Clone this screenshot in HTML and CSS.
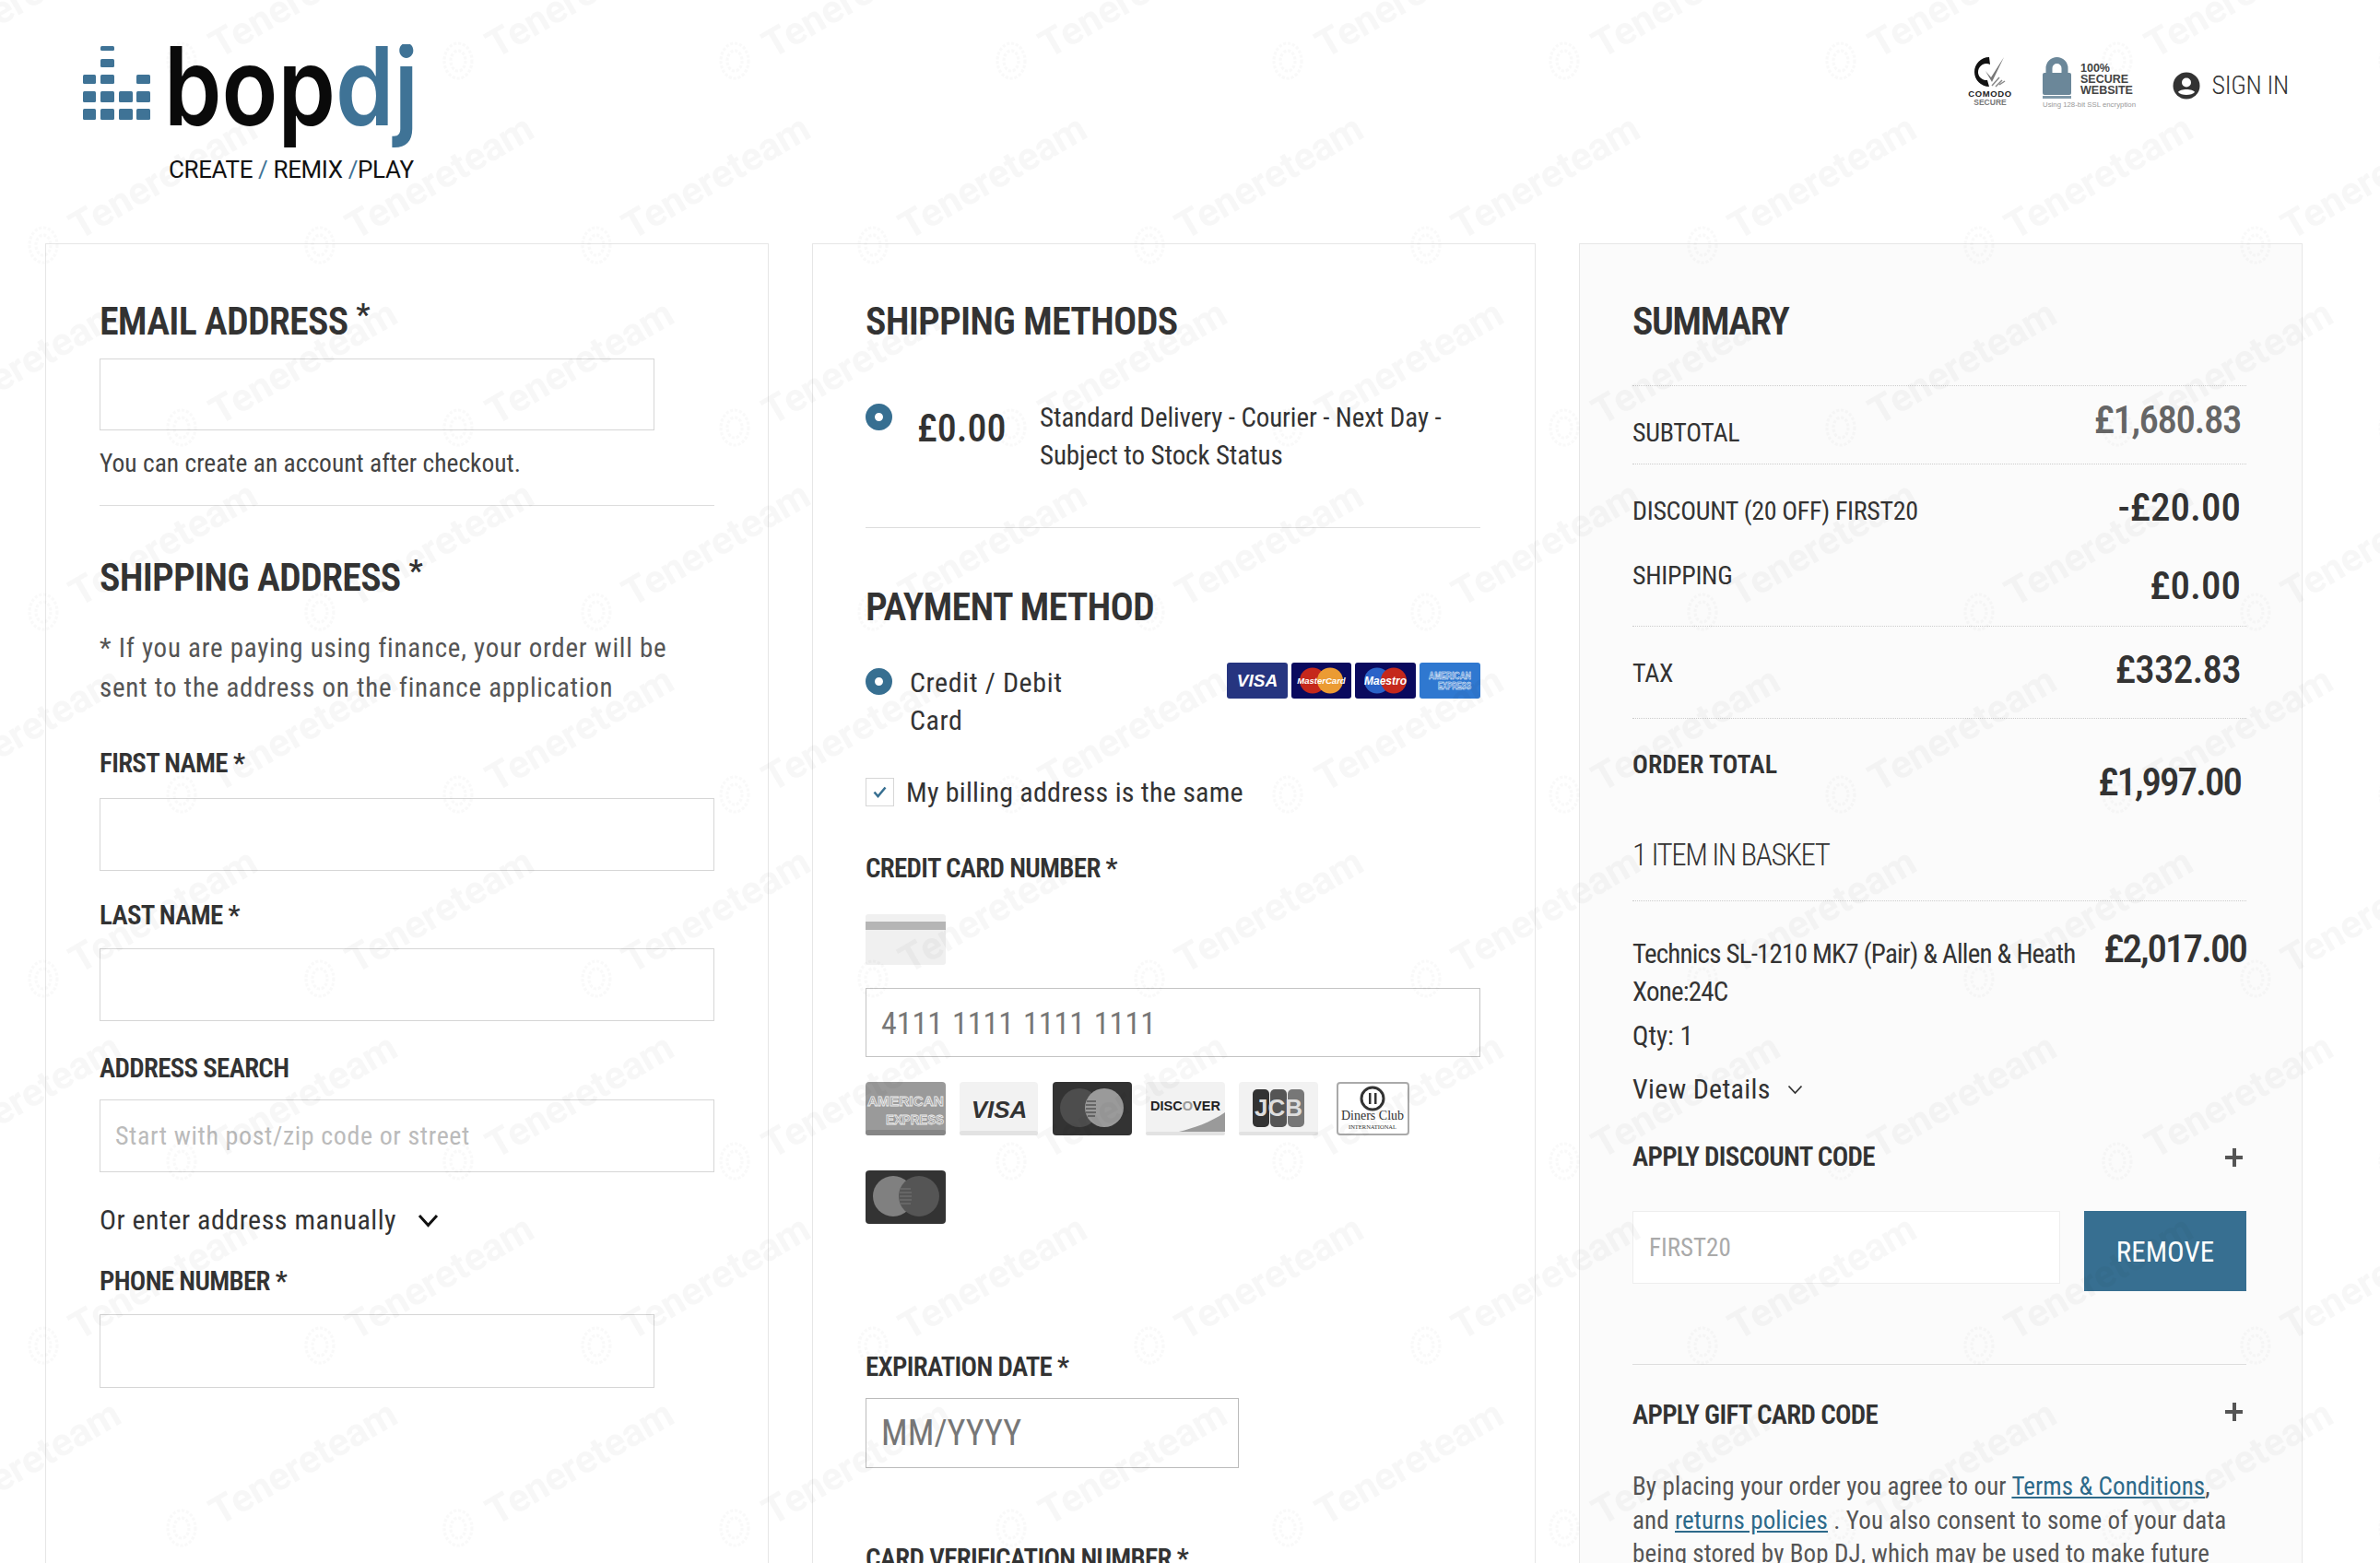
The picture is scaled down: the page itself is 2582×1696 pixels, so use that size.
FILE: index.html
```html
<!DOCTYPE html>
<html lang="en">
  <head>
    <meta charset="UTF-8" />
    <meta name="viewport" content="width=device-width, initial-scale=1.0" />
    <title>Bop DJ - Checkout</title>
    <link rel="stylesheet" href="styles.css">
  </head>
  <body>
    <header class="site-header">
      <a class="logo" href="#">
        <svg width="370" height="160" viewBox="88 48 370 160" role="img" aria-label="bopdj">
          <g fill="#3f7396">
            <rect x="90" y="118" width="14" height="12" rx="1.5" /><rect x="109" y="118" width="15" height="12" rx="1.5" /><rect x="129" y="118" width="15" height="12" rx="1.5" /><rect x="148" y="118" width="15" height="12" rx="1.5" />
            <rect x="90" y="99" width="14" height="12" rx="1.5" /><rect x="109" y="99" width="15" height="12" rx="1.5" /><rect x="129" y="99" width="15" height="12" rx="1.5" /><rect x="148" y="99" width="15" height="12" rx="1.5" />
            <rect x="90" y="81" width="14" height="10" rx="1.5" /><rect x="109" y="81" width="15" height="10" rx="1.5" /><rect x="148" y="81" width="15" height="10" rx="1.5" />
            <rect x="109" y="64" width="15" height="9" rx="1.5" />
            <rect x="109" y="50" width="15" height="5" rx="1.5" />
          </g>
          <text class="logo-word" x="178" y="136" textLength="186" lengthAdjust="spacingAndGlyphs" fill="#0a0a0a">bop</text>
          <text class="logo-word" x="364" y="136" textLength="90" lengthAdjust="spacingAndGlyphs" fill="#3f7396">dj</text>
          <text class="logo-tag" x="183" y="193" textLength="266" lengthAdjust="spacing" fill="#111">CREATE <tspan fill="#3f7396">/</tspan> REMIX <tspan fill="#3f7396">/</tspan>PLAY</text>
        </svg>
      </a>
      <div class="header-right">
        <svg class="badge-comodo" width="52" height="62" viewBox="0 0 52 62" role="img" aria-label="Comodo Secure">
          <path d="M25 0 A16 16 0 1 0 25 32 L23 25 A9 9 0 1 1 26 8 Z" fill="#111" />
          <path d="M21 15 L27 22 L41 0 L28 27 Z" fill="#777" />
          <path d="M28 31 L36 22 M32 32 L39 25 M36 30 L42 26" stroke="#888" stroke-width="1.5" />
          <text x="26" y="43" text-anchor="middle" class="comodo-1">COMODO</text>
          <text x="26" y="52" text-anchor="middle" class="comodo-2">SECURE</text>
        </svg>
        <svg class="badge-secure" width="102" height="58" viewBox="0 0 102 58" role="img" aria-label="100% Secure Website">
          <path d="M7 17 V12 A8.500 8.500 0 0 1 24 12 V17" fill="none" stroke="#6b8799" stroke-width="7" />
          <rect x="0" y="17" width="31" height="24" rx="2" fill="#6b8799" />
          <rect x="0" y="42" width="31" height="3" fill="#7f98a8" />
          <text x="41" y="16" class="secure-1">100%</text>
          <text x="41" y="28" class="secure-1">SECURE</text>
          <text x="41" y="40" class="secure-1">WEBSITE</text>
          <text x="0" y="54" class="secure-2" textLength="101" lengthAdjust="spacingAndGlyphs">Using 128-bit SSL encryption</text>
        </svg>
        <a class="sign-in" href="#">
          <svg width="30" height="30" viewBox="0 0 30 30">
            <circle cx="15" cy="15" r="14.500" fill="#333" />
            <circle cx="15" cy="11.500" r="5" fill="#fff" />
            <path d="M6 22 C8 18 22 18 24 22 C21 26 9 26 6 22 Z" fill="#fff" />
          </svg>
          <span>SIGN IN</span>
        </a>
      </div>
    </header>

    <main class="columns">
      <section class="col">
        <h2>EMAIL ADDRESS <sup>*</sup></h2>
        <input class="input input-short email-input" type="text" />
        <p class="help">You can create an account after checkout.</p>
        <hr class="rule rule-email" />

        <h2 class="shipping-title">SHIPPING ADDRESS <sup>*</sup></h2>
        <p class="note">* If you are paying using finance, your order will be sent to the address on the finance application</p>

        <label class="label first-label">FIRST NAME *</label>
        <input class="input first-input" type="text" />
        <label class="label last-label">LAST NAME *</label>
        <input class="input last-input" type="text" />
        <label class="label search-label">ADDRESS SEARCH</label>
        <input class="input search-input" type="text" placeholder="Start with post/zip code or street" />
        <div class="manual">
          <span>Or enter address manually</span>
          <svg width="23" height="15" viewBox="0 0 23 15"><path d="M2 2 L11.500 12.500 L21 2" fill="none" stroke="#111" stroke-width="3" /></svg>
        </div>
        <label class="label phone-label">PHONE NUMBER *</label>
        <input class="input input-short phone-input" type="text" />
      </section>

      <section class="col col-pay">
        <h2>SHIPPING METHODS</h2>
        <div class="ship-row">
          <span class="radio"></span>
          <span class="ship-price">£0.00</span>
          <span class="ship-text">Standard Delivery - Courier - Next Day - Subject to Stock Status</span>
        </div>
        <hr class="rule rule-ship" />

        <h2 class="payment-title">PAYMENT METHOD</h2>
        <div class="pay-row">
          <span class="radio"></span>
          <span class="pay-text">Credit / Debit<br />Card</span>
          <div class="pay-logos">
            <svg width="66" height="39" viewBox="0 0 66 39"><rect width="66" height="39" rx="3" fill="#263580" /><text x="33" y="26" text-anchor="middle" class="visa-small">VISA</text></svg>
            <svg width="65" height="39" viewBox="0 0 65 39"><rect width="65" height="39" rx="3" fill="#0a0a5e" /><circle cx="23" cy="19.500" r="14" fill="#c5281c" /><circle cx="42" cy="19.500" r="14" fill="#eb9b33" /><text x="32.500" y="23" text-anchor="middle" class="mc-small">MasterCard</text></svg>
            <svg width="66" height="39" viewBox="0 0 66 39"><rect width="66" height="39" rx="3" fill="#0a0a5e" /><circle cx="24" cy="19.500" r="14" fill="#2a62c8" /><circle cx="42" cy="19.500" r="14" fill="#c5281c" /><text x="33" y="24" text-anchor="middle" class="mc-small mc-maestro">Maestro</text></svg>
            <svg width="66" height="39" viewBox="0 0 66 39"><rect width="66" height="39" rx="3" fill="#2f78d0" /><text x="10" y="18" textLength="46" lengthAdjust="spacingAndGlyphs" class="amex-small">AMERICAN</text><text x="20" y="29" textLength="36" lengthAdjust="spacingAndGlyphs" class="amex-small">EXPRESS</text></svg>
          </div>
        </div>
        <div class="billing">
          <span class="checkbox"><svg width="15" height="13" viewBox="0 0 15 13"><path d="M1.500 6.500 L5.500 11 L13.500 1.500" fill="none" stroke="#376f91" stroke-width="2.500" /></svg></span>
          <span>My billing address is the same</span>
        </div>

        <label class="label card-label">CREDIT CARD NUMBER *</label>
        <div class="card-blank"><span></span></div>
        <input class="input card-input" type="text" placeholder="4111 1111 1111 1111" />

        <div class="card-icons">
          <svg width="87" height="58" viewBox="0 0 87 58"><rect width="87" height="58" rx="4" fill="#9a9a9a" /><rect y="52" width="87" height="6" rx="3" fill="#868686" /><text x="2" y="26" textLength="83" lengthAdjust="spacingAndGlyphs" class="amex-big">AMERICAN</text><text x="22" y="46" textLength="63" lengthAdjust="spacingAndGlyphs" class="amex-big">EXPRESS</text></svg>
          <svg class="icon-visa" width="85" height="58" viewBox="0 0 85 58"><rect width="85" height="58" rx="4" fill="#f2f2f2" /><rect y="53" width="85" height="5" rx="2.500" fill="#e2e2e2" /><text x="43" y="39" text-anchor="middle" class="visa-big">VISA</text></svg>
          <svg width="86" height="58" viewBox="0 0 86 58"><rect width="86" height="58" rx="4" fill="#333" /><circle cx="29" cy="28" r="21" fill="#4d4d4d" /><circle cx="56" cy="28" r="21" fill="#9a9a9a" /><path d="M37 21 h10 M36 25 h11 M36 29 h11 M36 33 h11 M38 37 h8" stroke="#666" stroke-width="2" /></svg>
          <svg width="86" height="58" viewBox="0 0 86 58"><rect width="86" height="58" rx="4" fill="#f2f2f2" /><path d="M36 54 L86 54 L86 33 C70 44 52 50 36 54 Z" fill="#9a9a9a" /><rect y="54" width="86" height="4" rx="2" fill="#e2e2e2" /><text x="5" y="31" textLength="76" lengthAdjust="spacingAndGlyphs" class="discover">DISC<tspan fill="#999">O</tspan>VER</text></svg>
          <svg width="86" height="58" viewBox="0 0 86 58"><rect width="86" height="58" rx="4" fill="#f2f2f2" /><rect y="54" width="86" height="4" rx="2" fill="#e2e2e2" /><rect x="15" y="8" width="18" height="41" rx="5" fill="#333" /><rect x="34" y="8" width="18" height="41" rx="5" fill="#555" /><rect x="53" y="8" width="18" height="41" rx="5" fill="#777" /><text x="43" y="37" text-anchor="middle" class="jcb">JCB</text></svg>
          <svg class="icon-diners" width="79" height="58" viewBox="0 0 79 58"><rect x="1" y="1" width="77" height="56" rx="3" fill="#fff" stroke="#aaa" stroke-width="2" /><circle cx="39" cy="18" r="12" fill="none" stroke="#333" stroke-width="3" /><rect x="35" y="12" width="2.500" height="12" fill="#333" /><rect x="41" y="12" width="2.500" height="12" fill="#333" /><text x="39" y="41" text-anchor="middle" class="diners-1">Diners Club</text><text x="39" y="51" text-anchor="middle" class="diners-2">INTERNATIONAL</text></svg>
          <svg width="87" height="58" viewBox="0 0 87 58"><rect width="87" height="58" rx="4" fill="#333" /><circle cx="30" cy="28" r="22" fill="#808080" /><circle cx="58" cy="28" r="22" fill="#555" /><path d="M38 20 h11 M37 24 h13 M37 28 h13 M37 32 h13 M38 36 h11" stroke="#666" stroke-width="2" /></svg>
        </div>

        <label class="label exp-label">EXPIRATION DATE *</label>
        <input class="input exp-input" type="text" placeholder="MM/YYYY" />
        <label class="label cvv-label">CARD VERIFICATION NUMBER *</label>
      </section>

      <section class="col col-summary">
        <h2>SUMMARY</h2>
        <div class="sum-row row-subtotal"><span class="sum-label">SUBTOTAL</span><span class="sum-value">£1,680.83</span></div>
        <div class="sum-row row-discount"><span class="sum-label">DISCOUNT (20 OFF) FIRST20</span><span class="sum-value">-£20.00</span></div>
        <div class="sum-row row-shipping"><span class="sum-label">SHIPPING</span><span class="sum-value">£0.00</span></div>
        <div class="sum-row row-tax"><span class="sum-label">TAX</span><span class="sum-value">£332.83</span></div>
        <div class="sum-row row-total"><span class="sum-label">ORDER TOTAL</span><span class="sum-value">£1,997.00</span></div>

        <h3 class="basket-title">1 ITEM IN BASKET</h3>
        <div class="item">
          <div class="item-top">
            <span class="item-name">Technics SL-1210 MK7 (Pair) &amp; Allen &amp; Heath Xone:24C</span>
            <span class="item-price">£2,017.00</span>
          </div>
          <p class="item-qty">Qty: 1</p>
          <div class="view-details">
            <span>View Details</span>
            <svg width="17" height="11" viewBox="0 0 17 11"><path d="M1.500 1.500 L8.500 9 L15.500 1.500" fill="none" stroke="#333" stroke-width="1.800" /></svg>
          </div>
        </div>

        <div class="toggle toggle-discount"><span>APPLY DISCOUNT CODE</span><span class="plus"></span></div>
        <div class="code-row">
          <input class="code-input" type="text" placeholder="FIRST20" />
          <button class="remove">REMOVE</button>
        </div>
        <hr class="rule rule-code" />
        <div class="toggle toggle-gift"><span>APPLY GIFT CARD CODE</span><span class="plus"></span></div>
        <p class="terms">By placing your order you agree to our <a href="#">Terms &amp; Conditions</a>, and <a href="#">returns policies</a> . You also consent to some of your data being stored by Bop DJ, which may be used to make future</p>
      </section>
    </main>

    <!-- watermark lies over the whole page -->
    <svg class="watermark" width="2582" height="1696">
      <defs>
        <pattern id="wm" patternUnits="userSpaceOnUse" x="0" y="100" width="300" height="398">
          <text class="wm-text" transform="translate(86 161) rotate(-30)">Tenereteam</text>
          <ellipse class="wm-seal" cx="47" cy="166" rx="15" ry="19" />
          <ellipse class="wm-seal" cx="47" cy="166" rx="8" ry="11" />
          <text class="wm-text" transform="translate(238 362) rotate(-30)">Tenereteam</text>
          <text class="wm-text" transform="translate(-62 362) rotate(-30)">Tenereteam</text>
          <ellipse class="wm-seal" cx="197" cy="364" rx="15" ry="19" />
          <ellipse class="wm-seal" cx="197" cy="364" rx="8" ry="11" />
        </pattern>
      </defs>
      <rect width="2582" height="1696" fill="url(#wm)" />
    </svg>
  </body>
</html>
```

FILE: styles.css
```css
* {
  margin: 0;
  padding: 0;
  box-sizing: border-box;
}

html,
body {
  height: 1696px;
  overflow: hidden;
}

body {
  position: relative;
  background-color: #fff;
  color: #333;
  font-family: Roboto, "Liberation Sans", sans-serif;
  font-stretch: 75%;
  font-size: 29px;
}

a {
  color: inherit;
  text-decoration: none;
}

/* header */
.site-header {
  display: flex;
  justify-content: space-between;
  align-items: flex-start;
  height: 264px;
  padding: 48px 99px 0 88px;
}

.logo svg {
  display: block;
}

.logo-word {
  font-family: Inter, sans-serif;
  font-size: 118px;
  font-weight: 600;
}

.logo-tag {
  font-family: Roboto, sans-serif;
  font-size: 26px;
  font-stretch: 90%;
}

.header-right {
  display: flex;
  align-items: flex-start;
  gap: 31px;
  padding-top: 14px;
}

.comodo-1 {
  font: 900 9.500px "Liberation Sans", sans-serif;
  letter-spacing: 0.6px;
  fill: #222;
}

.comodo-2 {
  font: 700 8.500px "Liberation Sans", sans-serif;
  fill: #777;
}

.secure-1 {
  font: 700 12.500px "Liberation Sans", sans-serif;
  fill: #444;
}

.secure-2 {
  font: 400 7px "Liberation Sans", sans-serif;
  fill: #999;
}

.sign-in {
  display: flex;
  align-items: center;
  gap: 12px;
  margin: 16px 0 0 8px;
  font-size: 28px;
  font-weight: 300;
  line-height: 30px;
  letter-spacing: -0.3px;
  color: #333;
}

/* columns */
.columns {
  display: grid;
  grid-template-columns: repeat(3, 785px);
  gap: 47px;
  padding-left: 49px;
}

.col {
  height: 1600px;
  padding: 59px 58px 0;
  border: 1px solid #e6e6e6;
}

.col-pay {
  padding-left: 57px;
  padding-right: 59px;
}

.col-summary {
  padding-left: 57px;
  padding-right: 60px;
  background-color: #fbfbfb;
}

h2 {
  font-size: 42px;
  font-weight: 600;
  line-height: 50px;
  letter-spacing: -0.8px;
  color: #333;
}

h2 sup {
  font-size: 34px;
  line-height: 0;
  vertical-align: 10px;
  font-weight: 600;
}

.input {
  display: block;
  width: 100%;
  height: 79px;
  padding: 0 16px;
  border: 1px solid #d6d6d6;
  background: transparent;
  font-family: inherit;
  font-stretch: inherit;
  font-size: 28px;
  letter-spacing: 0.6px;
}

.input::placeholder {
  color: #bbb;
}

.input-short {
  width: 602px;
}

.label {
  display: block;
  font-size: 29px;
  font-weight: 600;
  line-height: 36px;
  letter-spacing: -0.7px;
}

.rule {
  border: 0;
  border-top: 1px solid #ddd;
}

/* column 1 */
.email-input {
  margin-top: 15px;
  height: 78px;
}

.help {
  margin-top: 18px;
  font-size: 27.500px;
  line-height: 36px;
  color: #444;
}

.rule-email {
  margin-top: 27px;
}

.shipping-title {
  margin-top: 53px;
}

.note {
  max-width: 640px;
  margin-top: 30px;
  font-size: 29px;
  line-height: 43px;
  letter-spacing: 0.75px;
  color: #555;
}

.first-label {
  margin-top: 42px;
}

.first-input {
  margin-top: 20px;
}

.last-label {
  margin-top: 30px;
}

.last-input {
  margin-top: 18px;
}

.search-label {
  margin-top: 33px;
}

.search-input {
  margin-top: 16px;
}

.manual {
  display: flex;
  align-items: center;
  gap: 23px;
  margin-top: 34px;
  font-size: 30px;
  line-height: 36px;
  letter-spacing: 0.5px;
}

.phone-label {
  margin-top: 30px;
}

.phone-input {
  margin-top: 18px;
  height: 80px;
}

/* column 2 */
.radio {
  flex: none;
  display: block;
  width: 29px;
  height: 29px;
  border: 10px solid #376f91;
  border-radius: 50%;
  background-color: #fff;
}

.ship-row {
  display: flex;
  align-items: flex-start;
  margin-top: 59px;
}

.ship-row .radio {
  margin-top: 5px;
}

.ship-price {
  flex: none;
  width: 133px;
  margin: 7px 0 0 27px;
  font-size: 42px;
  font-weight: 500;
  line-height: 50px;
}

.ship-text {
  width: 460px;
  font-size: 29px;
  line-height: 41px;
  letter-spacing: -0.1px;
}

.rule-ship {
  margin-top: 57px;
}

.payment-title {
  margin-top: 61px;
}

.pay-row {
  display: flex;
  align-items: flex-start;
  margin-top: 36px;
}

.pay-row .radio {
  margin-top: 5px;
}

.pay-text {
  margin-left: 19px;
  font-size: 30px;
  line-height: 41px;
  letter-spacing: 0.6px;
}

.pay-logos {
  display: flex;
  gap: 4px;
  margin-left: auto;
  margin-top: -1px;
}

.billing {
  display: flex;
  align-items: center;
  gap: 13px;
  margin-top: 42px;
  font-size: 30px;
  line-height: 31px;
  letter-spacing: 0.25px;
}

.checkbox {
  flex: none;
  display: flex;
  align-items: center;
  justify-content: center;
  width: 31px;
  height: 31px;
  border: 1px solid #d6d6d6;
}

.card-label {
  margin-top: 49px;
}

.card-blank {
  width: 87px;
  height: 55px;
  margin-top: 32px;
  padding-top: 8px;
  border-radius: 3px;
  background-color: #f0f0f0;
}

.card-blank span {
  display: block;
  height: 9px;
  background-color: #b5b5b5;
}

.card-input {
  height: 75px;
  margin-top: 25px;
  border-color: #c4c4c4;
  font-size: 34px;
  letter-spacing: 0;
  word-spacing: 2px;
}

.card-input::placeholder,
.exp-input::placeholder {
  color: #777;
}

.card-icons {
  display: flex;
  flex-wrap: wrap;
  gap: 38px 15px;
  margin-top: 27px;
}

.card-icons svg {
  display: block;
}

.icon-visa {
  margin-right: 1px;
}

.icon-diners {
  margin-left: 5px;
}

.amex-big {
  font: 700 15px "Liberation Sans", sans-serif;
  fill: #9a9a9a;
  stroke: #eee;
  stroke-width: 0.8px;
}

.visa-big {
  font: italic 700 26px "Liberation Sans", sans-serif;
  fill: #333;
}

.discover {
  font: 700 14px "Liberation Sans", sans-serif;
  fill: #222;
}

.jcb {
  font: 700 26px "Liberation Sans", sans-serif;
  fill: #ddd;
}

.diners-1 {
  font: 400 14px "Liberation Serif", serif;
  fill: #333;
}

.diners-2 {
  font: 400 6.500px "Liberation Serif", serif;
  fill: #333;
}

.visa-small {
  font: italic 700 19px "Liberation Sans", sans-serif;
  fill: #fff;
}

.mc-small {
  font: italic 700 9.500px "Liberation Sans", sans-serif;
  fill: #fff;
}

.mc-maestro {
  font-size: 12px;
}

.amex-small {
  font: 700 10px "Liberation Sans", sans-serif;
  fill: #2f78d0;
  stroke: #fff;
  stroke-width: 0.5px;
}

.exp-label {
  margin-top: 137px;
}

.exp-input {
  width: 405px;
  height: 76px;
  margin-top: 16px;
  border-color: #bbb;
  font-size: 38px;
  letter-spacing: 0;
}

.cvv-label {
  margin-top: 80px;
}

/* summary */
.col-summary h2 {
  margin-bottom: 44px;
  letter-spacing: -1.5px;
}

.sum-row {
  display: flex;
  justify-content: space-between;
  align-items: flex-start;
  padding-right: 6px;
}

.sum-label {
  font-size: 28px;
  font-weight: 400;
  line-height: 36px;
  letter-spacing: -0.3px;
  color: #333;
}

.sum-value {
  font-size: 43px;
  font-weight: 500;
  line-height: 50px;
  color: #333;
}

.row-subtotal {
  height: 85px;
  border-top: 1px dotted #ccc;
}

.row-subtotal .sum-label {
  margin-top: 33px;
}

.row-subtotal .sum-value {
  margin-top: 11px;
  color: #666;
  letter-spacing: -1.5px;
}

.row-discount {
  height: 87px;
  border-top: 1px dotted #ccc;
}

.row-discount .sum-label {
  margin-top: 33px;
}

.row-discount .sum-value {
  margin-top: 21px;
}

.row-shipping {
  height: 89px;
}

.row-shipping .sum-label {
  margin-top: 17px;
}

.row-shipping .sum-value {
  margin-top: 20px;
}

.row-tax {
  height: 100px;
  border-top: 1px dotted #ccc;
}

.row-tax .sum-label {
  margin-top: 33px;
}

.row-tax .sum-value {
  margin-top: 21px;
  letter-spacing: -0.8px;
}

.row-total {
  height: 94px;
  border-top: 1px dotted #ccc;
}

.row-total .sum-label {
  margin-top: 32px;
  font-weight: 600;
  letter-spacing: 0;
}

.row-total .sum-value {
  margin-top: 43px;
  letter-spacing: -2px;
}

.basket-title {
  margin-top: 33px;
  font-size: 33px;
  font-weight: 300;
  line-height: 44px;
  letter-spacing: -1.5px;
}

.item {
  margin-top: 27px;
  padding-top: 26px;
  border-top: 1px dotted #ccc;
}

.item-top {
  display: flex;
  justify-content: space-between;
  align-items: flex-start;
}

.item-name {
  width: 500px;
  margin-top: 11px;
  font-size: 29px;
  line-height: 41px;
  letter-spacing: -0.8px;
}

.item-price {
  font-size: 43px;
  font-weight: 500;
  line-height: 50px;
  letter-spacing: -2px;
}

.item-qty {
  margin-top: 9px;
  font-size: 29px;
  line-height: 36px;
}

.view-details {
  display: flex;
  align-items: center;
  gap: 18px;
  margin-top: 22px;
  font-size: 30px;
  line-height: 36px;
  letter-spacing: 0.3px;
}

.toggle {
  display: flex;
  justify-content: space-between;
  align-items: center;
  font-size: 29px;
  font-weight: 600;
  line-height: 36px;
  letter-spacing: -0.7px;
}

.plus {
  position: relative;
  width: 19px;
  height: 19px;
  margin-right: 4px;
}

.plus::before,
.plus::after {
  content: "";
  position: absolute;
  background-color: #555;
}

.plus::before {
  left: 0;
  top: 8px;
  width: 19px;
  height: 4px;
}

.plus::after {
  left: 8px;
  top: 0;
  width: 4px;
  height: 20px;
}

.toggle-discount {
  margin-top: 37px;
}

.code-row {
  display: flex;
  justify-content: space-between;
  align-items: flex-start;
  margin-top: 41px;
}

.code-input {
  width: 464px;
  height: 79px;
  padding: 0 17px;
  border: 1px solid #eee;
  background-color: #fff;
  font-family: inherit;
  font-stretch: inherit;
  font-size: 27px;
}

.code-input::placeholder {
  color: #aaa;
}

.remove {
  width: 176px;
  height: 87px;
  padding-top: 2px;
  border: 0;
  background-color: #376f91;
  color: #fff;
  font-family: inherit;
  font-stretch: inherit;
  font-size: 31px;
}

.rule-code {
  margin-top: 79px;
}

.toggle-gift {
  margin-top: 36px;
}

.toggle-gift .plus {
  margin-top: -8px;
}

.terms {
  margin-top: 42px;
  font-size: 27px;
  line-height: 36.500px;
  letter-spacing: 0.1px;
  color: #555;
}

.terms a {
  color: #2d6a8a;
  text-decoration: underline;
}

/* watermark */
.watermark {
  position: absolute;
  left: 0;
  top: 0;
  pointer-events: none;
}

.wm-text {
  font: 700 42px Roboto, sans-serif;
  fill: #000;
  fill-opacity: 0.03;
}

.wm-seal {
  fill: none;
  stroke: #000;
  stroke-opacity: 0.025;
  stroke-width: 3px;
  stroke-dasharray: 3 2;
}
```
